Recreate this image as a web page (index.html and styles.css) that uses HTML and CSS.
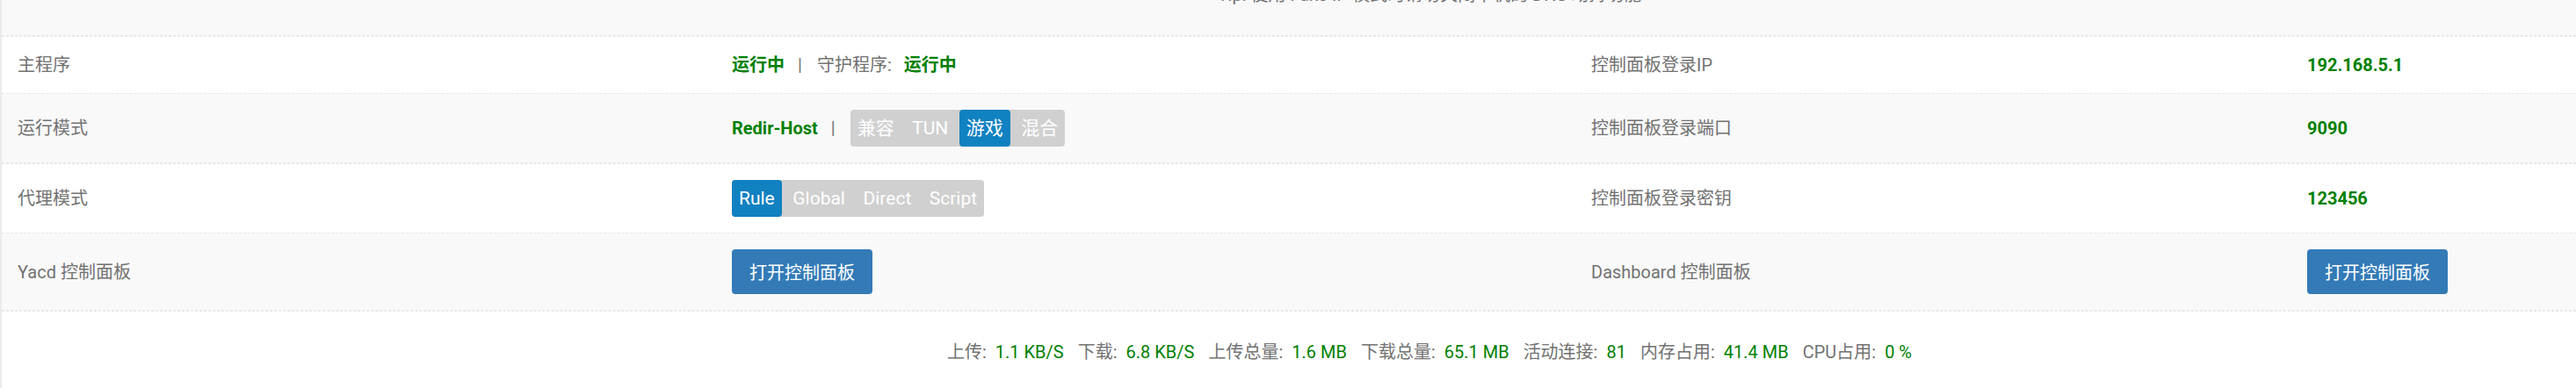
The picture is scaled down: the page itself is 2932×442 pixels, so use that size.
FILE: index.html
```html
<!DOCTYPE html>
<html lang="zh-CN">
<head>
<meta charset="utf-8">
<title>OpenClash 状态</title>
<link rel="stylesheet" href="styles.css">
</head>
<body>
<div class="page">
  <div class="tip"><p>Tip: 使用 Fake-IP 模式时请勿关闭本机的 DNS 劫持功能</p></div>

  <div class="row">
    <div class="cell label">主程序</div>
    <div class="cell"><b class="ok">运行中</b><span class="sep">|</span><span class="label">守护程序:</span><b class="ok after">运行中</b></div>
    <div class="cell label">控制面板登录IP</div>
    <div class="cell"><b class="ok">192.168.5.1</b></div>
  </div>

  <div class="row alt">
    <div class="cell label">运行模式</div>
    <div class="cell"><b class="ok">Redir-Host</b><span class="sep">|</span>
      <div class="seg"><span class="opt">兼容</span><span class="opt">TUN</span><span class="opt on">游戏</span><span class="opt">混合</span></div>
    </div>
    <div class="cell label">控制面板登录端口</div>
    <div class="cell"><b class="ok">9090</b></div>
  </div>

  <div class="row">
    <div class="cell label">代理模式</div>
    <div class="cell">
      <div class="seg"><span class="opt on">Rule</span><span class="opt">Global</span><span class="opt">Direct</span><span class="opt">Script</span></div>
    </div>
    <div class="cell label">控制面板登录密钥</div>
    <div class="cell"><b class="ok">123456</b></div>
  </div>

  <div class="row alt">
    <div class="cell label">Yacd 控制面板</div>
    <div class="cell"><button class="btn" type="button">打开控制面板</button></div>
    <div class="cell label">Dashboard 控制面板</div>
    <div class="cell"><button class="btn" type="button">打开控制面板</button></div>
  </div>

  <div class="stats"><span class="k">上传:</span><span class="v">1.1 KB/S</span><span class="k">下载:</span><span class="v">6.8 KB/S</span><span class="k">上传总量:</span><span class="v">1.6 MB</span><span class="k">下载总量:</span><span class="v">65.1 MB</span><span class="k">活动连接:</span><span class="v">81</span><span class="k">内存占用:</span><span class="v">41.4 MB</span><span class="k">CPU占用:</span><span class="v last">0 %</span></div>
</div>
</body>
</html>
```

FILE: styles.css
```css
html, body {
  margin: 0;
  padding: 0;
  background: #ffffff;
}

body {
  font-family: Roboto, "Noto Sans CJK SC", sans-serif;
  font-size: 20px;
  line-height: 28px;
  color: #727272;
}

.page {
  border-left: 2px solid #ebebeb;
  min-height: 442px;
  box-sizing: border-box;
}

.tip {
  height: 40px;
  overflow: hidden;
  background: #f9f9f9;
  border-bottom: 1px dashed #e6e6e6;
  padding-left: 320px;
  text-align: center;
}

.tip p {
  margin: -16px 0 0;
  line-height: 20px;
  white-space: nowrap;
  color: #727272;
}

.row {
  display: grid;
  grid-template-columns: 813px 978px 815px 1fr;
  background: #ffffff;
  border-top: 1px dashed #e8e8e8;
}

.row.alt {
  background: #f9f9f9;
  border-bottom: 1px dashed #e6e6e6;
}

.cell {
  display: flex;
  align-items: center;
  padding: 18px;
  white-space: nowrap;
}

.label {
  color: #727272;
}

.ok {
  color: #008000;
  font-weight: 700;
}

.ok.after {
  margin-left: 14px;
}

.sep {
  color: #727272;
  margin: 0 17px 0 15px;
}

.seg {
  display: inline-flex;
  gap: 4.5px;
  height: 42px;
  background: #d0d0d0;
  border-radius: 4px;
}

.opt {
  display: inline-block;
  padding: 0 8px;
  font-size: 21px;
  line-height: 42px;
  color: #ffffff;
  border-radius: 4px;
}

.opt.on {
  background: #1081c1;
}

.btn {
  display: inline-flex;
  align-items: center;
  height: 51px;
  padding: 0 20px;
  border: none;
  border-radius: 4px;
  background: #337ab7;
  color: #ffffff;
  font-family: Roboto, "Noto Sans CJK SC", sans-serif;
  font-size: 20px;
  cursor: pointer;
}

.stats {
  border-top: 1px dashed #e8e8e8;
  padding: 32px 0 0 320px;
  text-align: center;
  white-space: nowrap;
}

.stats .k {
  color: #727272;
}

.stats .v {
  color: #008000;
  margin: 0 16px 0 10px;
}

.stats .v.last {
  margin-right: 0;
}
```
